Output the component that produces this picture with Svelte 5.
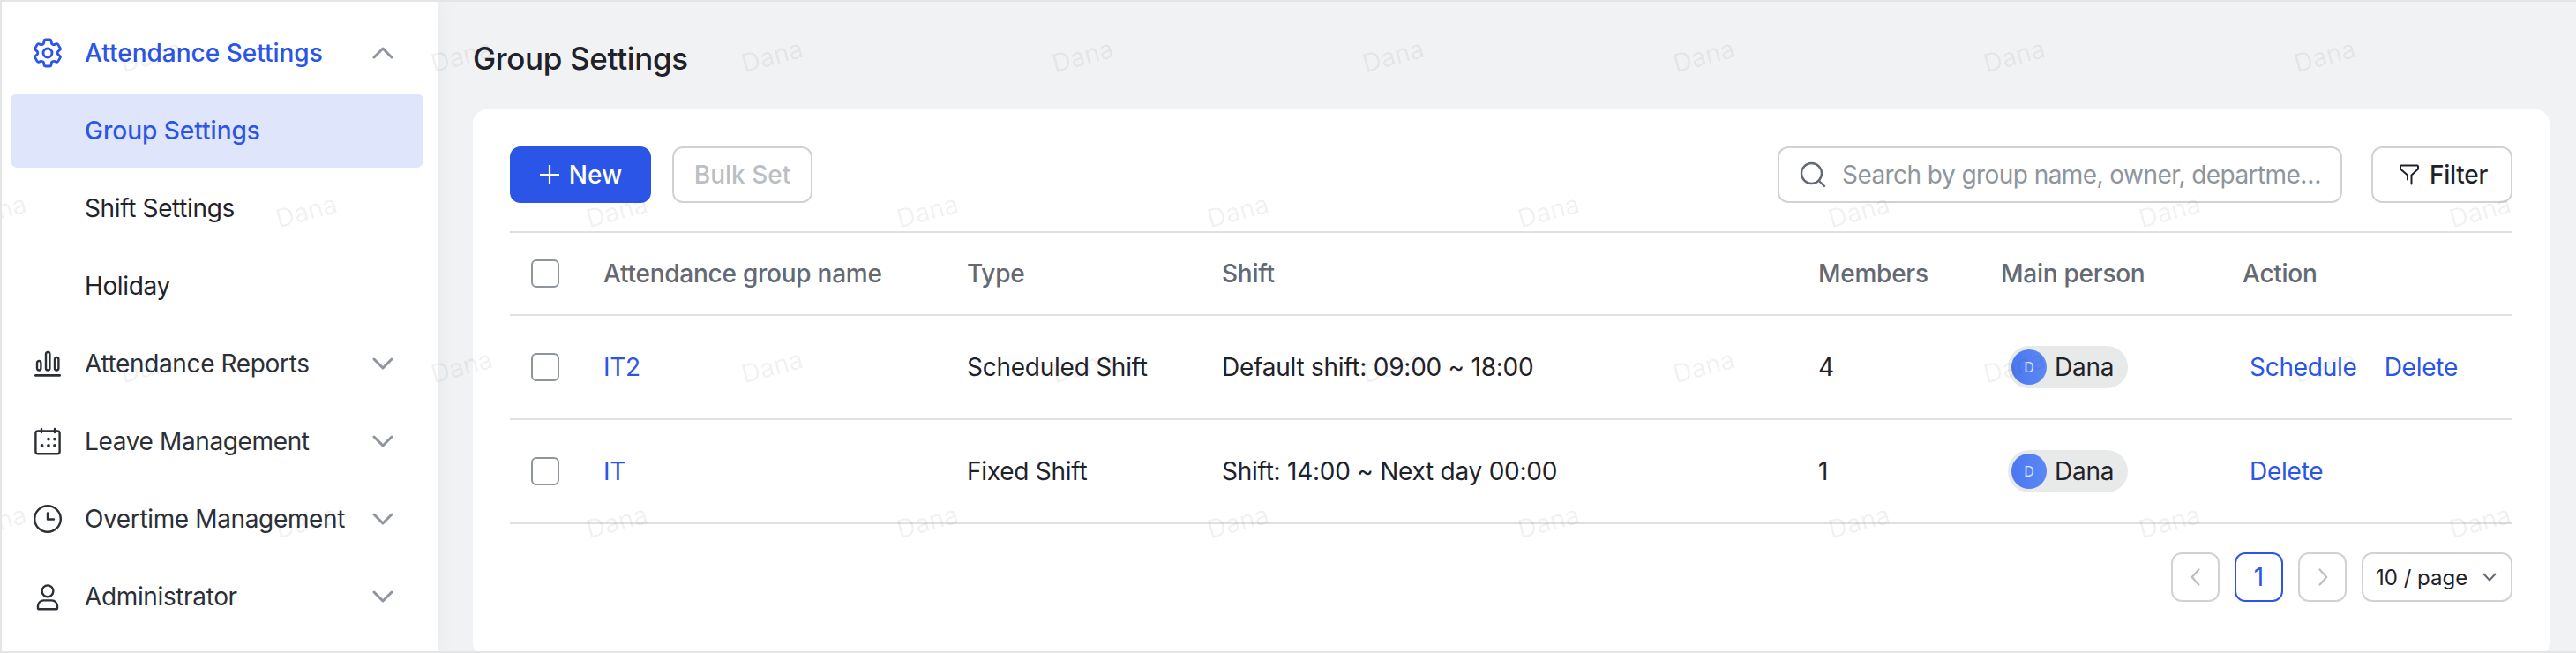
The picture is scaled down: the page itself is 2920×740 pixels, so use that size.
<script lang="ts">
  type Nav = { label: string; icon: string };

  const SUB_ITEMS = ["Group Settings", "Shift Settings", "Holiday"];
  const NAV_ITEMS: Nav[] = [
    { label: "Attendance Reports", icon: "bars" },
    { label: "Leave Management", icon: "calendar" },
    { label: "Overtime Management", icon: "clock" },
    { label: "Administrator", icon: "person" },
  ];
  const COLUMNS = ["Attendance group name", "Type", "Shift", "Members", "Main person", "Action"];
  const ROWS = [
    { name: "IT2", type: "Scheduled Shift", shift: "Default shift: 09:00 ~ 18:00", members: 4, actions: ["Schedule", "Delete"] },
    { name: "IT", type: "Fixed Shift", shift: "Shift: 14:00 ~ Next day 00:00", members: 1, actions: ["Delete"] },
  ];

  // watermark tiles repeat every 176px, each second row shifted by half a tile
  const MARK_ROWS = [0, 1, 2, 3];
  const MARK_COLS = [0, 1, 2, 3, 4, 5, 6, 7, 8];
</script>

<div class="page">
  <aside class="sidebar">
    <div class="nav-row open">
      <svg class="nav-icon gear" viewBox="0 0 24 24" fill="none" stroke="currentColor" stroke-width="1.7" stroke-linejoin="round">
        <path d="M9.594 3.94c.09-.542.56-.94 1.11-.94h2.593c.55 0 1.02.398 1.11.94l.213 1.281c.063.374.313.686.645.87.074.04.147.083.22.127.325.196.72.257 1.075.124l1.217-.456a1.125 1.125 0 0 1 1.37.49l1.296 2.247a1.125 1.125 0 0 1-.26 1.431l-1.003.827c-.293.241-.438.613-.43.992a7.723 7.723 0 0 1 0 .255c-.008.378.137.75.43.991l1.004.827c.424.35.534.955.26 1.43l-1.298 2.247a1.125 1.125 0 0 1-1.369.491l-1.217-.456c-.355-.133-.75-.072-1.076.124a6.47 6.47 0 0 1-.22.128c-.331.183-.581.495-.644.869l-.213 1.281c-.09.543-.56.94-1.11.94h-2.594c-.55 0-1.019-.398-1.11-.94l-.213-1.281c-.062-.374-.312-.686-.644-.87a6.52 6.52 0 0 1-.22-.127c-.325-.196-.72-.257-1.076-.124l-1.217.456a1.125 1.125 0 0 1-1.369-.49l-1.297-2.247a1.125 1.125 0 0 1 .26-1.431l1.004-.827c.292-.24.437-.613.43-.991a6.932 6.932 0 0 1 0-.255c.007-.38-.138-.751-.43-.992l-1.004-.827a1.125 1.125 0 0 1-.26-1.43l1.297-2.247a1.125 1.125 0 0 1 1.37-.491l1.216.456c.356.133.751.072 1.076-.124.072-.044.146-.086.22-.128.332-.183.582-.495.644-.869l.214-1.28Z" />
        <circle cx="12" cy="12" r="3" />
      </svg>
      <span class="nav-label">Attendance Settings</span>
      <svg class="chevron" viewBox="0 0 24 14" fill="none" stroke="currentColor" stroke-width="3" stroke-linecap="round" stroke-linejoin="round">
        <path d="M2 12 12 2l10 10" />
      </svg>
    </div>

    {#each SUB_ITEMS as item, i (item)}
      <div class="nav-row sub" class:active={i === 0}>
        <span class="nav-label">{item}</span>
      </div>
    {/each}

    {#each NAV_ITEMS as nav (nav.label)}
      <div class="nav-row">
        <svg class="nav-icon" viewBox="0 0 32 32" fill="none" stroke="currentColor" stroke-width="2.4">
          {#if nav.icon === "bars"}
            <rect x="4" y="13" width="4.4" height="10.5" rx="2.2" />
            <rect x="14" y="3" width="4.4" height="20.5" rx="2.2" />
            <rect x="24" y="9" width="4.4" height="14.5" rx="2.2" />
            <path d="M2.4 29.4h27.2" stroke-width="2.8" stroke-linecap="round" />
          {:else if nav.icon === "calendar"}
            <rect x="2.4" y="4.4" width="27.2" height="25.8" rx="2.4" />
            <path d="M9 2v4M24 2v4" stroke-linecap="round" />
            <g fill="currentColor" stroke="none">
              <circle cx="17" cy="13.6" r="1.9" /><circle cx="24" cy="13.6" r="1.9" />
              <circle cx="9.6" cy="21" r="1.9" /><circle cx="17" cy="21" r="1.9" /><circle cx="24" cy="21" r="1.9" />
            </g>
          {:else if nav.icon === "clock"}
            <circle cx="16" cy="16" r="14.8" />
            <path d="M16 9.5v7h7" stroke-linecap="round" stroke-linejoin="round" />
          {:else}
            <circle cx="16" cy="9.8" r="6.4" />
            <path d="M5 29.6v-2.8a6.4 6.4 0 0 1 6.4-6.4h9.2a6.4 6.4 0 0 1 6.4 6.4v2.8a.6.6 0 0 1-.6.6H5.6a.6.6 0 0 1-.6-.6Z" stroke-linejoin="round" />
          {/if}
        </svg>
        <span class="nav-label">{nav.label}</span>
        <svg class="chevron" viewBox="0 0 24 14" fill="none" stroke="currentColor" stroke-width="3" stroke-linecap="round" stroke-linejoin="round">
          <path d="M2 2l10 10L22 2" />
        </svg>
      </div>
    {/each}
  </aside>

  <main class="main">
    <h1 class="title">Group Settings</h1>

    <section class="card">
      <div class="toolbar">
        <button class="btn primary">
          <svg class="plus" viewBox="0 0 24 24" fill="none" stroke="currentColor" stroke-width="2.2"><path d="M12 1v22M1 12h22" /></svg>
          New
        </button>
        <button class="btn disabled">Bulk Set</button>
        <div class="search">
          <svg class="search-icon" viewBox="0 0 30 30" fill="none" stroke="currentColor" stroke-width="2.4" stroke-linecap="round">
            <circle cx="13.5" cy="13.5" r="11.5" /><path d="M22 22l6 6" />
          </svg>
          <span class="placeholder">Search by group name, owner, department name</span>
        </div>
        <button class="btn filter">
          <svg class="filter-icon" viewBox="0 0 24 24" fill="none" stroke="currentColor" stroke-width="2" stroke-linecap="round" stroke-linejoin="round">
            <path d="M10 17.5v-5L2 5.5v-3a1 1 0 0 1 1-1h18a1 1 0 0 1 1 1v3l-7.5 7V22.5" />
          </svg>
          Filter
        </button>
      </div>

      <div class="table">
        <div class="row head">
          <span class="check"></span>
          {#each COLUMNS as col (col)}
            <span>{col}</span>
          {/each}
        </div>
        {#each ROWS as row (row.name)}
          <div class="row body">
            <span class="check"></span>
            <span class="link name">{row.name}</span>
            <span>{row.type}</span>
            <span>{row.shift}</span>
            <span>{row.members}</span>
            <span>
              <span class="pill"><span class="avatar">D</span>Dana</span>
            </span>
            <span class="actions">
              {#each row.actions as action (action)}
                <span class="link">{action}</span>
              {/each}
            </span>
          </div>
        {/each}
      </div>

      <div class="pager">
        <span class="page-btn muted">
          <svg viewBox="0 0 14 24" fill="none" stroke="currentColor" stroke-width="2.6" stroke-linecap="round" stroke-linejoin="round"><path d="M11 2 2 12l9 10" /></svg>
        </span>
        <span class="page-btn current">1</span>
        <span class="page-btn muted">
          <svg viewBox="0 0 14 24" fill="none" stroke="currentColor" stroke-width="2.6" stroke-linecap="round" stroke-linejoin="round"><path d="M3 2l9 10-9 10" /></svg>
        </span>
        <span class="page-size">
          10 / page
          <svg viewBox="0 0 16 10" fill="none" stroke="currentColor" stroke-width="2" stroke-linecap="round" stroke-linejoin="round"><path d="M1.5 1.5 8 8.5l6.5-7" /></svg>
        </span>
      </div>
    </section>
  </main>

  <div class="marks" aria-hidden="true">
    {#each MARK_ROWS as r (r)}
      <div class="mark-row" class:shift={r % 2 === 1}>
        {#each MARK_COLS as c (c)}
          <span class="mark">Dana</span>
        {/each}
      </div>
    {/each}
  </div>
</div>

<style>
  :global(body) {
    margin: 0;
    background: #f1f2f4;
  }

  .page {
    position: relative;
    box-sizing: border-box;
    display: flex;
    width: 2920px;
    height: 740px;
    overflow: hidden;
    border: 2px solid #e4e5e7;
    border-right: 0;
    background: #f1f2f4;
    color: #1f2329;
    font-family: Inter, "Liberation Sans", sans-serif;
    font-size: 28px;
  }

  .sidebar {
    flex: none;
    box-sizing: border-box;
    width: 494px;
    padding: 14px 16px 0 10px;
    background: #fff;
    box-shadow: 4px 0 20px rgba(31, 35, 41, 0.035);
    z-index: 1;
  }

  .nav-row {
    display: flex;
    align-items: center;
    height: 84px;
    margin: 2px 0 4px;
    padding-left: 26px;
    color: #2b2f36;
    border-radius: 8px;
    letter-spacing: -0.013em;
  }

  .nav-row.open {
    color: #2b55e6;
    font-weight: 500;
    letter-spacing: 0;
  }

  .nav-row.sub {
    color: #1f2329;
  }

  .nav-row.active {
    background: #dfe5fa;
    color: #2b55e6;
    font-weight: 500;
    letter-spacing: 0;
  }

  .nav-icon {
    flex: none;
    width: 32px;
    height: 32px;
    margin-right: 26px;
  }

  .nav-icon.gear {
    width: 40px;
    height: 40px;
    margin: 0 22px 0 -4px;
  }

  .nav-row.sub .nav-label {
    margin-left: 58px;
  }

  .nav-label {
    flex: 1;
    white-space: nowrap;
  }

  .chevron {
    flex: none;
    width: 24px;
    height: 14px;
    margin-right: 34px;
    color: #8f959e;
  }

  .main {
    flex: 1;
    min-width: 0;
    padding: 0 30px 0 40px;
  }

  .title {
    margin: 0;
    height: 122px;
    font-size: 35px;
    line-height: 128px;
    font-weight: 500;
    letter-spacing: -0.01em;
  }

  .card {
    box-sizing: border-box;
    height: 620px;
    padding: 42px 42px 0;
    background: #fff;
    border-radius: 16px;
  }

  .toolbar {
    display: flex;
    align-items: center;
    gap: 24px;
    height: 64px;
  }

  .btn {
    display: flex;
    align-items: center;
    justify-content: center;
    box-sizing: border-box;
    height: 64px;
    padding: 0;
    border: 2px solid #d0d3d6;
    border-radius: 12px;
    background: #fff;
    font: inherit;
    font-weight: 500;
    color: #1f2329;
  }

  .btn.primary {
    width: 160px;
    gap: 10px;
    background: #2b55e6;
    border-color: #2b55e6;
    color: #fff;
  }

  .plus {
    width: 24px;
    height: 24px;
  }

  .btn.disabled {
    width: 159px;
    color: #bbbfc4;
  }

  .search {
    display: flex;
    align-items: center;
    box-sizing: border-box;
    width: 640px;
    height: 64px;
    margin-left: auto;
    padding: 0 12px 0 23px;
    border: 2px solid #d0d3d6;
    border-radius: 12px;
    letter-spacing: -0.02em;
  }

  .search-icon {
    flex: none;
    width: 30px;
    height: 30px;
    margin-right: 18px;
    color: #646a73;
  }

  .placeholder {
    overflow: hidden;
    white-space: nowrap;
    text-overflow: ellipsis;
    color: #8f959e;
  }

  .btn.filter {
    width: 160px;
    margin-left: 9px;
    padding-left: 3px;
    gap: 11px;
    letter-spacing: -0.01em;
  }

  .filter-icon {
    width: 24px;
    height: 24px;
  }

  .table {
    margin-top: 32px;
    border-top: 2px solid #dee0e3;
    letter-spacing: -0.009em;
  }

  .row {
    display: grid;
    grid-template-columns: 106px 412px 289px 676px 207px 274px 1fr;
    align-items: center;
    box-sizing: border-box;
    border-bottom: 2px solid #dee0e3;
  }

  .row.head {
    height: 94px;
    color: #646a73;
    font-weight: 500;
  }

  .row.body {
    height: 118px;
  }

  .check {
    box-sizing: border-box;
    width: 32px;
    height: 32px;
    margin-left: 24px;
    border: 2px solid #8f959e;
    border-radius: 6px;
  }

  .link {
    color: #2b55e6;
  }

  .pill {
    display: inline-flex;
    align-items: center;
    box-sizing: border-box;
    height: 48px;
    margin-left: 8px;
    padding: 0 16px 0 4px;
    gap: 9px;
    border-radius: 24px;
    background: #e8e9e9;
  }

  .avatar {
    display: flex;
    align-items: center;
    justify-content: center;
    width: 40px;
    height: 40px;
    border-radius: 50%;
    background: linear-gradient(90deg, #4a78f0, #5d87f5);
    color: #dfe8ff;
    font-size: 16px;
  }

  .actions {
    display: flex;
    gap: 31px;
    padding-left: 8px;
  }

  .pager {
    display: flex;
    justify-content: flex-end;
    gap: 17px;
    margin-top: 32px;
  }

  .page-btn {
    display: flex;
    align-items: center;
    justify-content: center;
    box-sizing: border-box;
    width: 55px;
    height: 56px;
    border: 2px solid #d0d3d6;
    border-radius: 12px;
  }

  .page-btn svg {
    width: 12px;
    height: 24px;
  }

  .page-btn.muted {
    color: #bbbfc4;
  }

  .page-btn.current {
    border-color: #2b55e6;
    color: #2b55e6;
  }

  .page-size {
    display: flex;
    align-items: center;
    justify-content: space-between;
    box-sizing: border-box;
    width: 171px;
    height: 56px;
    padding: 0 16px 0 14px;
    border: 2px solid #d0d3d6;
    border-radius: 12px;
    font-size: 24px;
  }

  .page-size svg {
    width: 16px;
    height: 10px;
    color: #646a73;
  }

  .marks {
    position: absolute;
    top: 36px;
    left: -2px;
    z-index: 2;
    pointer-events: none;
  }

  .mark-row {
    display: flex;
    height: 176px;
    margin-left: 136px;
  }

  .mark-row.shift {
    margin-left: -40px;
  }

  .mark {
    flex: none;
    width: 352px;
    height: 52px;
    line-height: 52px;
    color: rgba(31, 35, 41, 0.07);
    font-size: 29px;
    transform: rotate(-15deg);
    transform-origin: 34px 26px;
  }
</style>
